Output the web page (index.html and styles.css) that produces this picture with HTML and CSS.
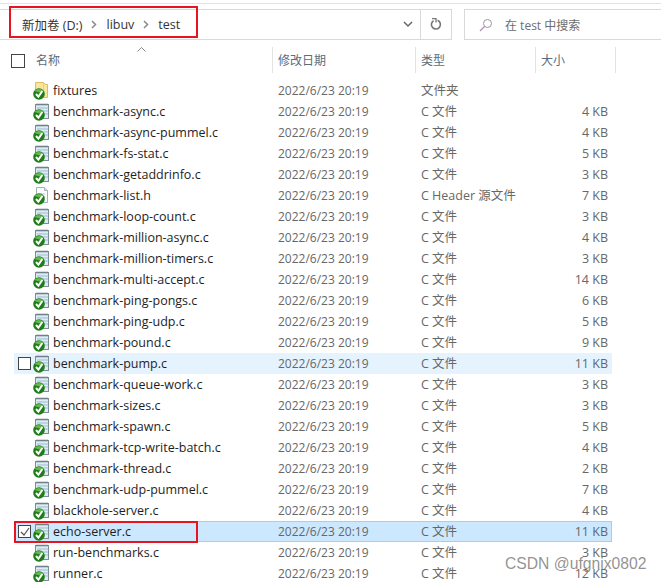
FILE: index.html
```html
<!DOCTYPE html>
<html lang="en">
<head>
    <meta charset="UTF-8">
    <meta name="viewport" content="width=device-width, initial-scale=1.0">
    <title>test</title>
    <link rel="stylesheet" href="styles.css">
</head>
<body>
    <svg class="defs" width="0" height="0">
        <symbol id="badge" viewBox="0 0 18 21">
            <circle cx="7" cy="14" r="5.800" fill="#1f7d18"/>
            <path d="M2.500 11a6 6 0 0 1 9 0l-4 1.500z" fill="#66b94f"/>
            <path d="M4 14l2.400 2.600L10.400 11" fill="none" stroke="#fff" stroke-width="2"/>
        </symbol>
        <symbol id="cfile" viewBox="0 0 18 21">
            <rect x="3.500" y="3.500" width="13" height="14" fill="#dcebf4" stroke="#7d8d96"/>
            <path d="M5 7h11M9 10h7M10 13h6" stroke="#9dbdd0"/>
            <path d="M5 2.500v2M7 2.500v2M9 2.500v2M11 2.500v2M13 2.500v2M15 2.500v2" stroke="#66767f"/>
            <use href="#badge"/>
        </symbol>
        <symbol id="hfile" viewBox="0 0 18 21">
            <path d="M4.500 2.500h8l3 3v12h-11z" fill="#fbfcfd" stroke="#a6aeb5"/>
            <path d="M12.500 2.500v3h3" fill="#dfe5ea" stroke="#a6aeb5"/>
            <path d="M8 9h5M8 12h5" stroke="#b9c6d2"/>
            <use href="#badge"/>
        </symbol>
        <symbol id="folder" viewBox="0 0 18 21">
            <path d="M3.500 2.500h8l2 2h2v13h-12z" fill="#fbe49b" stroke="#dcbd66"/>
            <path d="M11.500 2.500v15" stroke="#ecd07a"/>
            <use href="#badge"/>
        </symbol>
    </svg>

    <div class="top-line"></div>

    <!-- address bar and search -->
    <div class="toolbar">
        <div class="address">
            <div class="crumbs">
                <span>新加卷 (D:)</span>
                <svg class="crumb-arrow" width="6" height="9" viewBox="0 0 6 9"><path d="M1 1l3.500 3.500L1 8" fill="none" stroke="#8a8a8a" stroke-width="1.500"/></svg>
                <span>libuv</span>
                <svg class="crumb-arrow" width="6" height="9" viewBox="0 0 6 9"><path d="M1 1l3.500 3.500L1 8" fill="none" stroke="#8a8a8a" stroke-width="1.500"/></svg>
                <span>test</span>
            </div>
            <svg class="chevron" width="10" height="7" viewBox="0 0 10 7"><path d="M1 1l4 4 4-4" fill="none" stroke="#666" stroke-width="1.500"/></svg>
            <div class="refresh">
                <svg width="12" height="13" viewBox="0 0 12 13"><path d="M7.500 2.300a4.500 4.500 0 1 1-4 .4" fill="none" stroke="#777" stroke-width="1.600"/><path d="M2 .5h4v4" fill="none" stroke="#777" stroke-width="1.300"/></svg>
            </div>
        </div>
        <div class="search">
            <svg width="14" height="14" viewBox="0 0 14 14"><circle cx="8.500" cy="5.500" r="4" fill="none" stroke="#999"/><path d="M5.500 8.500L1 13" stroke="#b08fb0" stroke-width="1.200"/></svg>
            <span>在 test 中搜索</span>
        </div>
    </div>

    <!-- column headers -->
    <div class="head">
        <span class="head-check"></span>
        <span class="head-cell head-name">名称
            <svg class="sort" width="9" height="5" viewBox="0 0 9 5"><path d="M.5 4.500l4-4 4 4" fill="none" stroke="#888"/></svg>
        </span>
        <span class="head-cell head-date">修改日期</span>
        <span class="head-cell head-type">类型</span>
        <span class="head-cell head-size">大小</span>
    </div>

    <!-- file list -->
    <div class="list">
        <div class="row"><i></i><svg class="icon"><use href="#folder"/></svg><span class="name">fixtures</span><span>2022/6/23 20:19</span><span class="type">文件夹</span><span></span></div>
        <div class="row"><i></i><svg class="icon"><use href="#cfile"/></svg><span class="name">benchmark-async.c</span><span>2022/6/23 20:19</span><span class="type">C 文件</span><span class="size">4 KB</span></div>
        <div class="row"><i></i><svg class="icon"><use href="#cfile"/></svg><span class="name">benchmark-async-pummel.c</span><span>2022/6/23 20:19</span><span class="type">C 文件</span><span class="size">4 KB</span></div>
        <div class="row"><i></i><svg class="icon"><use href="#cfile"/></svg><span class="name">benchmark-fs-stat.c</span><span>2022/6/23 20:19</span><span class="type">C 文件</span><span class="size">5 KB</span></div>
        <div class="row"><i></i><svg class="icon"><use href="#cfile"/></svg><span class="name">benchmark-getaddrinfo.c</span><span>2022/6/23 20:19</span><span class="type">C 文件</span><span class="size">3 KB</span></div>
        <div class="row"><i></i><svg class="icon"><use href="#hfile"/></svg><span class="name">benchmark-list.h</span><span>2022/6/23 20:19</span><span class="type">C Header 源文件</span><span class="size">7 KB</span></div>
        <div class="row"><i></i><svg class="icon"><use href="#cfile"/></svg><span class="name">benchmark-loop-count.c</span><span>2022/6/23 20:19</span><span class="type">C 文件</span><span class="size">3 KB</span></div>
        <div class="row"><i></i><svg class="icon"><use href="#cfile"/></svg><span class="name">benchmark-million-async.c</span><span>2022/6/23 20:19</span><span class="type">C 文件</span><span class="size">4 KB</span></div>
        <div class="row"><i></i><svg class="icon"><use href="#cfile"/></svg><span class="name">benchmark-million-timers.c</span><span>2022/6/23 20:19</span><span class="type">C 文件</span><span class="size">3 KB</span></div>
        <div class="row"><i></i><svg class="icon"><use href="#cfile"/></svg><span class="name">benchmark-multi-accept.c</span><span>2022/6/23 20:19</span><span class="type">C 文件</span><span class="size">14 KB</span></div>
        <div class="row"><i></i><svg class="icon"><use href="#cfile"/></svg><span class="name">benchmark-ping-pongs.c</span><span>2022/6/23 20:19</span><span class="type">C 文件</span><span class="size">6 KB</span></div>
        <div class="row"><i></i><svg class="icon"><use href="#cfile"/></svg><span class="name">benchmark-ping-udp.c</span><span>2022/6/23 20:19</span><span class="type">C 文件</span><span class="size">5 KB</span></div>
        <div class="row"><i></i><svg class="icon"><use href="#cfile"/></svg><span class="name">benchmark-pound.c</span><span>2022/6/23 20:19</span><span class="type">C 文件</span><span class="size">9 KB</span></div>
        <div class="row row-hover"><i class="check"></i><svg class="icon"><use href="#cfile"/></svg><span class="name">benchmark-pump.c</span><span>2022/6/23 20:19</span><span class="type">C 文件</span><span class="size">11 KB</span></div>
        <div class="row"><i></i><svg class="icon"><use href="#cfile"/></svg><span class="name">benchmark-queue-work.c</span><span>2022/6/23 20:19</span><span class="type">C 文件</span><span class="size">3 KB</span></div>
        <div class="row"><i></i><svg class="icon"><use href="#cfile"/></svg><span class="name">benchmark-sizes.c</span><span>2022/6/23 20:19</span><span class="type">C 文件</span><span class="size">3 KB</span></div>
        <div class="row"><i></i><svg class="icon"><use href="#cfile"/></svg><span class="name">benchmark-spawn.c</span><span>2022/6/23 20:19</span><span class="type">C 文件</span><span class="size">5 KB</span></div>
        <div class="row"><i></i><svg class="icon"><use href="#cfile"/></svg><span class="name">benchmark-tcp-write-batch.c</span><span>2022/6/23 20:19</span><span class="type">C 文件</span><span class="size">4 KB</span></div>
        <div class="row"><i></i><svg class="icon"><use href="#cfile"/></svg><span class="name">benchmark-thread.c</span><span>2022/6/23 20:19</span><span class="type">C 文件</span><span class="size">2 KB</span></div>
        <div class="row"><i></i><svg class="icon"><use href="#cfile"/></svg><span class="name">benchmark-udp-pummel.c</span><span>2022/6/23 20:19</span><span class="type">C 文件</span><span class="size">7 KB</span></div>
        <div class="row"><i></i><svg class="icon"><use href="#cfile"/></svg><span class="name">blackhole-server.c</span><span>2022/6/23 20:19</span><span class="type">C 文件</span><span class="size">4 KB</span></div>
        <div class="row row-selected"><i class="check checked"><svg width="12" height="12" viewBox="0 0 12 12"><path d="M2 6l3 3 5-7" fill="none" stroke="#555" stroke-width="1.200"/></svg></i><svg class="icon"><use href="#cfile"/></svg><span class="name">echo-server.c</span><span>2022/6/23 20:19</span><span class="type">C 文件</span><span class="size">11 KB</span></div>
        <div class="row"><i></i><svg class="icon"><use href="#cfile"/></svg><span class="name">run-benchmarks.c</span><span>2022/6/23 20:19</span><span class="type">C 文件</span><span class="size">3 KB</span></div>
        <div class="row"><i></i><svg class="icon"><use href="#cfile"/></svg><span class="name">runner.c</span><span>2022/6/23 20:19</span><span class="type">C 文件</span><span class="size">12 KB</span></div>
    </div>

    <!-- annotations drawn over the screenshot -->
    <div class="mark mark-address"></div>
    <div class="mark mark-row"></div>
    <div class="watermark">CSDN @ufgnix0802</div>
</body>
</html>
```

FILE: styles.css
```css
body {
    margin: 0;
    width: 661px;
    height: 582px;
    overflow: hidden;
    position: relative;
    background-color: #fff;
    font-family: "Open Sans", "Noto Sans CJK SC", sans-serif;
    font-size: 12px;
    color: #676767;
}
.defs {
    position: absolute;
}
.top-line {
    height: 1px;
    margin-top: 3px;
    background-color: #e3e3e3;
}
.toolbar {
    display: flex;
    height: 31px;
    margin-top: 5px;
}
.address {
    display: flex;
    align-items: center;
    width: 452px;
    box-sizing: border-box;
    border: 1px solid #d9d9d9;
    border-left: none;
}
.crumbs {
    display: flex;
    align-items: center;
    gap: 9px;
    flex: 1;
    padding-left: 22px;
    color: #333;
    font-size: 12.500px;
}
.chevron {
    margin-right: 7px;
}
.refresh {
    display: flex;
    align-items: center;
    justify-content: center;
    width: 30px;
    height: 100%;
    border-left: 1px solid #d9d9d9;
}
.search {
    display: flex;
    align-items: center;
    gap: 12px;
    flex: 1;
    margin-left: 12px;
    padding-left: 14px;
    border: 1px solid #d9d9d9;
    border-right: none;
    font-size: 12px;
    color: #6d6d6d;
}
.head {
    display: flex;
    height: 26px;
    margin-top: 7px;
    color: #5b6b7c;
}
.head-check {
    width: 12px;
    height: 12px;
    margin: 7px 0 0 11px;
    border: 1px solid #444;
}
.head-cell {
    display: flex;
    align-items: center;
    box-sizing: border-box;
    border-right: 1px solid #e3e3e3;
    padding-left: 5px;
    position: relative;
}
.head-name {
    width: 248px;
    padding-left: 11px;
}
.head-date {
    width: 143px;
}
.head-type {
    width: 120px;
}
.head-size {
    width: 80px;
}
.sort {
    position: absolute;
    left: 112px;
    top: 0;
}
.list {
    margin-top: 7px;
}
.row {
    display: grid;
    grid-template-columns: 14px 21px 225px 143px 1fr 60px;
    align-items: center;
    box-sizing: border-box;
    width: 598px;
    height: 21px;
    margin-left: 14px;
    padding: 0 4px;
    white-space: nowrap;
}
.row .name {
    color: #1e1e1e;
    font-size: 12.500px;
}
.icon {
    width: 18px;
    height: 21px;
}
.type,
.size {
    font-size: 12.500px;
}
.type {
    padding-bottom: 2px;
}
.size {
    text-align: right;
}
.row-hover {
    background-color: #e5f3ff;
}
.row-selected {
    background-color: #cce8ff;
    box-shadow: inset 0 0 0 1px #99d1ff;
}
.check {
    display: block;
    box-sizing: border-box;
    width: 13px;
    height: 13px;
    border: 1px solid #444;
    background-color: #fff;
}
.checked svg {
    display: block;
}
.mark {
    position: absolute;
    box-sizing: border-box;
    border: 2px solid #e8141f;
}
.mark-address {
    left: 9px;
    top: 6px;
    width: 189px;
    height: 32px;
}
.mark-row {
    left: 14px;
    top: 521px;
    width: 184px;
    height: 22px;
}
.watermark {
    position: absolute;
    left: 505px;
    top: 555px;
    font-family: "Liberation Sans", sans-serif;
    font-size: 15.700px;
    color: rgba(110, 110, 110, 0.75);
}
```
